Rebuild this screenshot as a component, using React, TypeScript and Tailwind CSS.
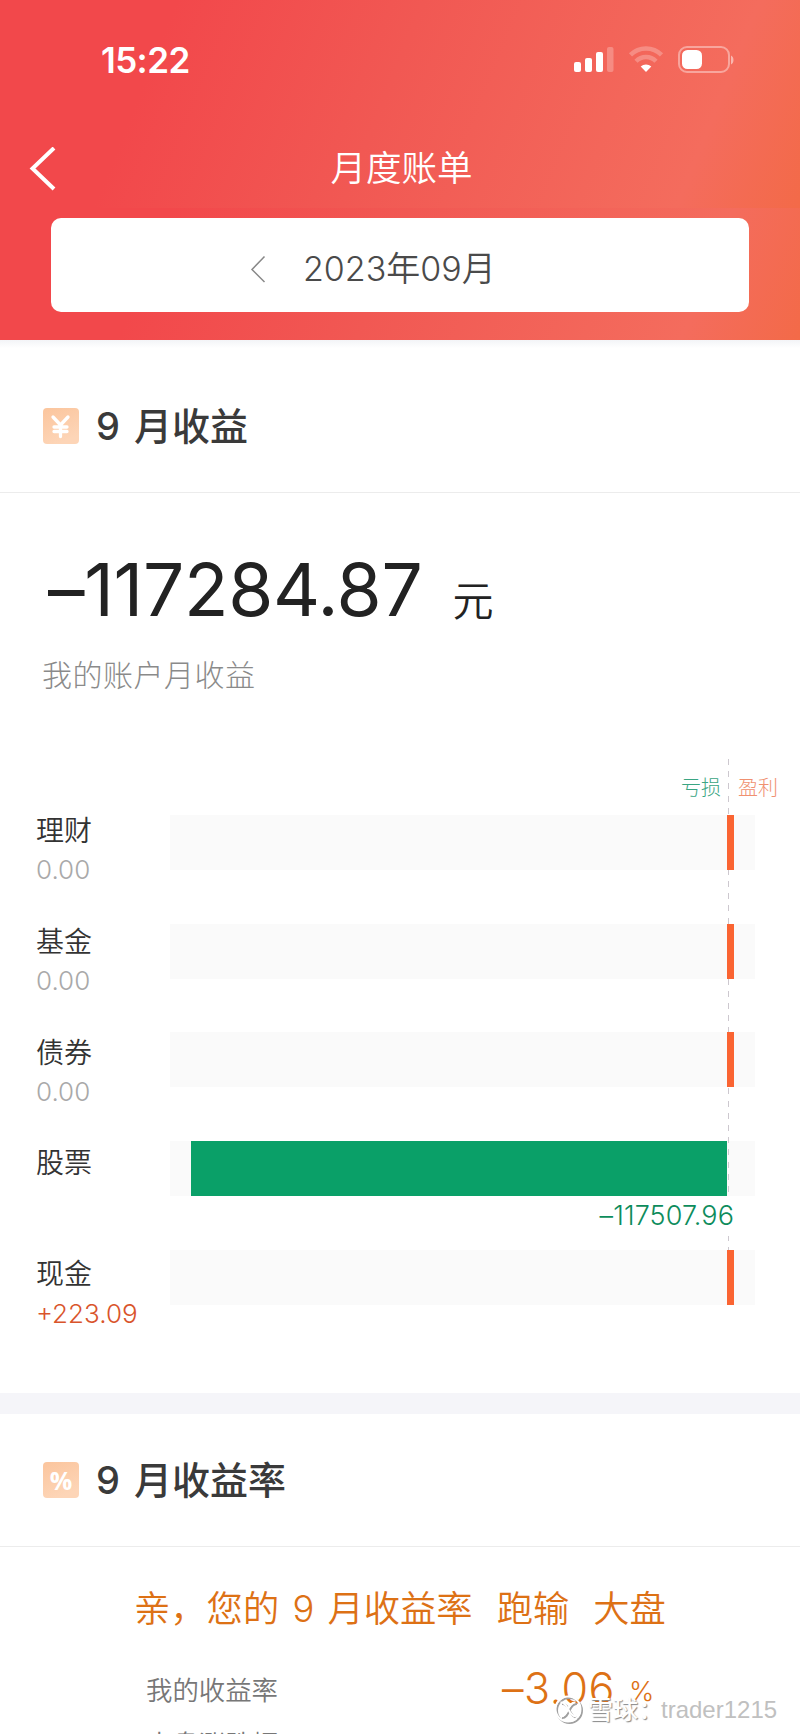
import type { ReactNode } from 'react';

interface Row {
  label: string;
  value: string;
  tone: 'flat' | 'gain' | 'loss';
}

const rows: Row[] = [
  { label: '理财', value: '0.00', tone: 'flat' },
  { label: '基金', value: '0.00', tone: 'flat' },
  { label: '债券', value: '0.00', tone: 'flat' },
  { label: '股票', value: '–117507.96', tone: 'loss' },
  { label: '现金', value: '+223.09', tone: 'gain' },
];

function StatusBar() {
  return (
    <div className="flex h-[120px] items-center justify-between pl-[101px] pr-[66px]">
      <span className="text-[35px] leading-none font-semibold tracking-[-0.6px]">15:22</span>
      <svg className="h-7 w-[161px]" viewBox="0 0 161 28" fill="#fff">
        <rect x="1" y="16" width="7" height="10" rx="2" />
        <rect x="12" y="12" width="7" height="14" rx="2" />
        <rect x="23" y="6" width="7" height="20" rx="2" />
        <rect x="34" y="1" width="6.500" height="25" rx="2" opacity="0.25" />
        <g fill="none" stroke="#fff" strokeWidth="4.500" opacity="0.25">
          <path d="M57.500 8.800a22 22 0 0 1 31 0" />
          <path d="M63 15.200a14 14 0 0 1 20 0" />
        </g>
        <path d="M73 26l-5.300-5.500c3-2.700 7.600-2.700 10.600 0z" />
        <rect x="106" y="1" width="50" height="25" rx="8" fill="none" stroke="#fff" strokeWidth="2" opacity="0.4" />
        <rect x="109" y="4" width="20" height="19" rx="5.500" />
        <path d="M158 9.500c3.300 1.500 3.300 7.500 0 9z" opacity="0.5" />
      </svg>
    </div>
  );
}

function Header() {
  return (
    <header className="text-white">
      <div className="h-[208px] bg-[linear-gradient(112deg,#f2484b_20%,#f15853_48%,#f46c5d_86%,#f36a48_100%)]">
        <StatusBar />
        <div className="flex h-[97px] items-center pl-7">
          <svg className="h-11 w-7" viewBox="0 0 28 44" fill="none" stroke="#fff" strokeWidth="4">
            <path d="M26 1L4.500 21.500L26 42" />
          </svg>
          <h1 className="flex-1 pr-[53px] text-center text-[35.5px] leading-none font-[350]">月度账单</h1>
        </div>
      </div>
      <div className="h-[132px] bg-[linear-gradient(112deg,#f2484b_20%,#f15853_48%,#f46c5d_86%,#f36a48_100%)] px-[51px] pt-[10px]">
        <div className="flex h-[94px] items-center rounded-[10px] bg-white pt-2 pl-[199px]">
          <svg className="h-7 w-4" viewBox="0 0 16 28" fill="none" stroke="#888" strokeWidth="1.500">
            <path d="M14.500 1.500L2 14.500L14.500 27" />
          </svg>
          <span className="pl-[37px] text-[34px] leading-none font-[350] text-[#4a4a4a]">2023年09月</span>
        </div>
      </div>
    </header>
  );
}

function SectionTitle({ icon, children }: { icon: ReactNode; children: ReactNode }) {
  return (
    <div className="flex items-center border-b border-[#ececec] pl-[43px]">
      <svg className="h-9 w-9" viewBox="0 0 36 36">
        <defs>
          <linearGradient id="badge" x1="0" y1="0" x2="0.400" y2="1">
            <stop offset="0" stopColor="#fbc59d" />
            <stop offset="1" stopColor="#fdd5b7" />
          </linearGradient>
        </defs>
        <rect width="36" height="36" rx="4" fill="url(#badge)" />
        {icon}
      </svg>
      <h2 className="pl-[17px] text-[38px] leading-none font-medium text-[#3a3a3a] [word-spacing:4px]">{children}</h2>
    </div>
  );
}

function RowLabel({ label, value, tone }: Row) {
  return (
    <div className="h-[110.800px] leading-10">
      <div className="text-[28px] font-[350] text-[#333]">{label}</div>
      {tone === 'flat' && <div className="-mt-px text-[26px] font-light text-[#a9a9a9]">{value}</div>}
      {tone === 'gain' && <div className="text-[26px] font-[350] text-[#d9542b]">{value}</div>}
    </div>
  );
}

function RowBar({ value, tone }: Row) {
  return (
    <div className="h-[108.700px]">
      <div className="flex h-[55px] bg-[#fafafa]">
        {tone === 'loss' ? (
          <div className="z-10 ml-[21px] w-[536px] bg-[#0aa068]" />
        ) : (
          <div className="z-10 ml-[557px] w-[6.500px] bg-[#fa6432]" />
        )}
      </div>
      {tone === 'loss' && (
        <div className="flex justify-end pr-[21px]">
          <span className="z-10 bg-white text-[27px] leading-10 font-[350] tracking-[0.100px] text-[#0d8c5c]">
            {value}
          </span>
        </div>
      )}
    </div>
  );
}

function Watermark() {
  return (
    <div className="absolute top-[1695px] left-[554px] flex items-center">
      <svg className="h-[30px] w-[30px]" viewBox="0 0 30 30" fill="none">
        <g stroke="#a0a0a0" strokeWidth="2">
          <circle cx="15.500" cy="15.500" r="12.500" />
          <path d="M8 9c8-1 7 14 16 14M23 9C15 8 16 23 8 23" />
        </g>
        <g stroke="#fff" strokeWidth="2">
          <circle cx="14" cy="14" r="12.500" />
          <path d="M6.500 7.500c8-1 7 14 16 14M21.500 7.500c-8-1-7 14-15 14" />
        </g>
      </svg>
      <span className="w-[77px] pl-1 text-[25px] leading-7 font-medium whitespace-nowrap text-white [text-shadow:1px_1px_1px_#888]">
        雪球：
      </span>
      <span className="font-['Liberation_Sans',sans-serif] text-[24px] leading-7 text-[#c0c0c0]">trader1215</span>
    </div>
  );
}

export default function App() {
  return (
    <div className="relative h-[1734px] w-[800px] overflow-hidden bg-white font-['Inter','Noto_Sans_CJK_SC',sans-serif]">
      <Header />
      <div className="h-2 bg-gradient-to-b from-[#f3f4f7] to-white" />
      <section>
        <div className="grid h-[145px] pt-[12px]">
          <SectionTitle
            icon={
              <path d="M10 9l7.500 8L25 9M17.500 17V28.500M11 19h13M11 23.500h13" fill="none" stroke="#fff" strokeWidth="3.300" strokeLinecap="round" />
            }
          >
            9 月收益
          </SectionTitle>
        </div>
        <div className="flex items-baseline pt-[60px] pl-[48px] text-[#222]">
          <span className="text-[73px] leading-[74px] tracking-[-0.300px]">–117284.87</span>
          <span className="pl-[30px] text-[41px] leading-none font-[350]">元</span>
        </div>
        <p className="pt-7 pl-[42px] text-[30px] leading-10 font-light tracking-[0.500px] text-[#8a8a8a]">我的账户月收益</p>
      </section>
      <section className="relative mt-[60px] pb-[28px] pl-9">
        <div className="absolute top-1 left-[727.500px] h-[500px] w-[1.500px] bg-[repeating-linear-gradient(to_bottom,#cdc8cf_0_6px,transparent_6px_12.200px)]" />
        <div className="flex h-14 items-center pt-[10px] pl-[645px] text-[20px] font-light">
          <span className="text-[#3aa583]">亏损</span>
          <span className="pl-[17px] text-[#f09070]">盈利</span>
        </div>
        <div className="flex">
          <div className="w-[134px]">
            {rows.map((row) => (
              <RowLabel key={row.label} {...row} />
            ))}
          </div>
          <div className="w-[585px] pt-1">
            {rows.map((row) => (
              <RowBar key={row.label} {...row} />
            ))}
          </div>
        </div>
      </section>
      <div className="h-[21px] bg-[#f5f5f9]" />
      <section>
        <div className="grid h-[133px]">
          <SectionTitle
            icon={
              <text x="18" y="27.500" textAnchor="middle" fill="#fff" fontFamily="Open Sans" fontSize="25" fontWeight="700">
                %
              </text>
            }
          >
            9 月收益率
          </SectionTitle>
        </div>
        <p className="flex gap-[24px] pt-[37px] pl-[134px] text-[36.300px] leading-[50px] font-[350] text-[#dd7115]">
          <span className="[word-spacing:3px]">亲，您的 9 月收益率</span>
          <span>跑输</span>
          <span>大盘</span>
        </p>
        <div className="flex items-center pt-[20px] pl-[146px] leading-[60px] font-[350]">
          <span className="w-[356px] pt-1 text-[26.400px] text-[#777]">我的收益率</span>
          <span className="w-[127px] text-[43px] tracking-[0.600px] text-[#dd7115]">–3.06</span>
          <span className="pt-2 text-[27px] text-[#dd7115]">%</span>
        </div>
        <div className="-mt-[3px] flex pl-[146px] text-[26.400px] leading-[50px] font-[350] text-[#777]">
          <span className="w-[422px]">大盘涨跌幅</span>
          <span>–2.01%</span>
        </div>
      </section>
      <Watermark />
    </div>
  );
}
